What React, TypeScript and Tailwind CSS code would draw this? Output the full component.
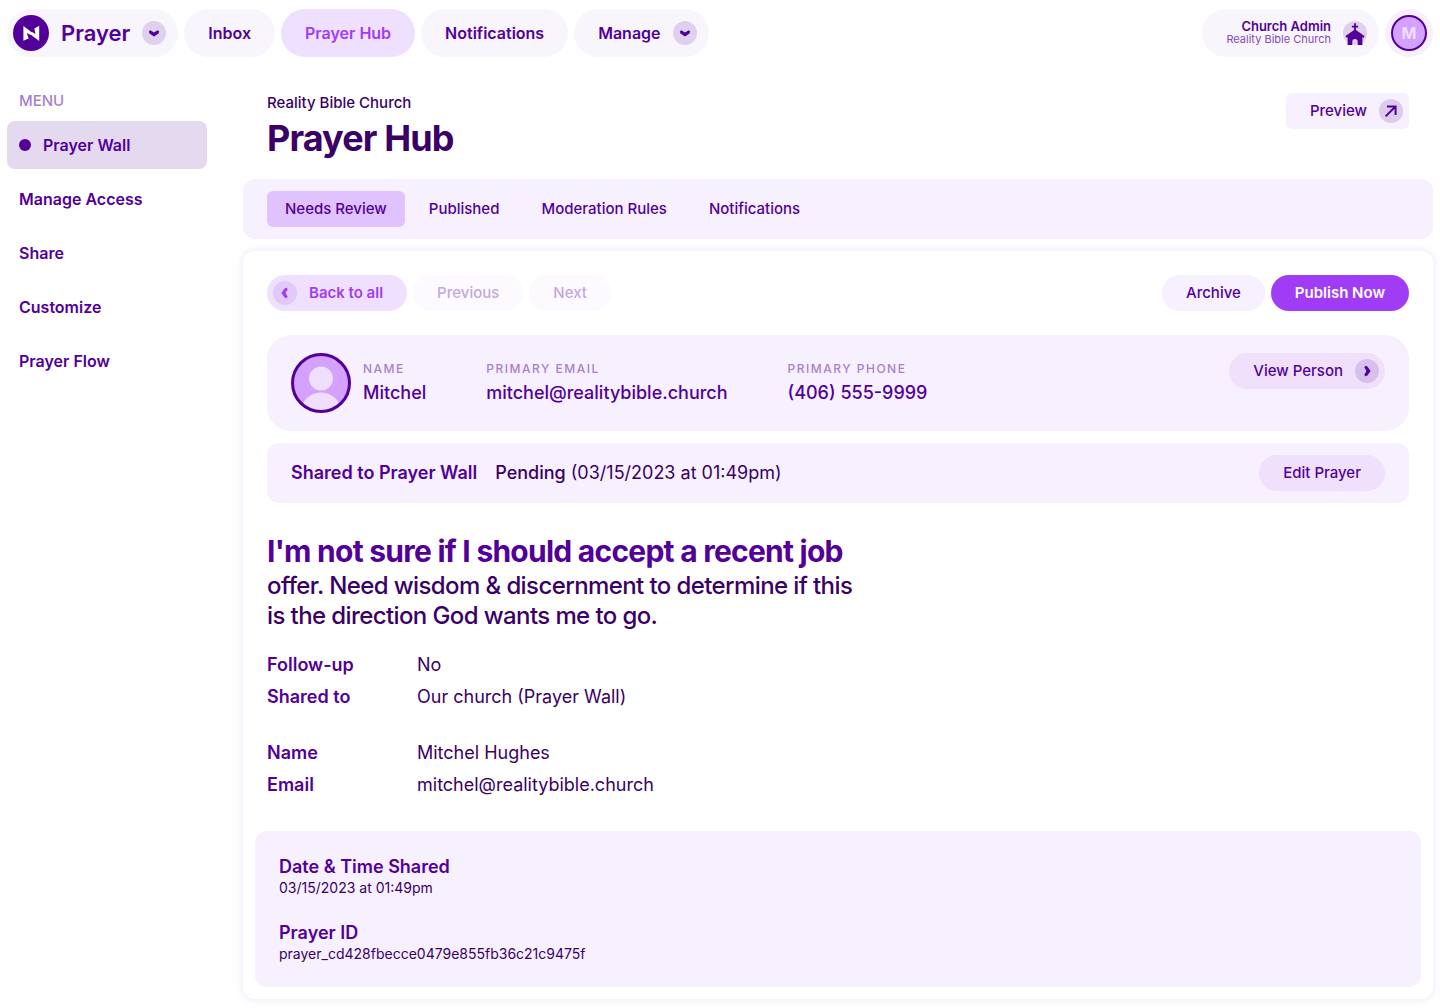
import type { ReactNode } from 'react'

const NAV = [
  { label: 'Inbox' },
  { label: 'Prayer Hub', active: true },
  { label: 'Notifications' },
  { label: 'Manage', menu: true },
]

const MENU = ['Prayer Wall', 'Manage Access', 'Share', 'Customize', 'Prayer Flow']

const TABS = ['Needs Review', 'Published', 'Moderation Rules', 'Notifications']

const PERSON = [
  { label: 'NAME', value: 'Mitchel' },
  { label: 'PRIMARY EMAIL', value: 'mitchel@realitybible.church' },
  { label: 'PRIMARY PHONE', value: '(406) 555-9999' },
]

const DETAILS = [
  [
    { label: 'Follow-up', value: 'No' },
    { label: 'Shared to', value: 'Our church (Prayer Wall)' },
  ],
  [
    { label: 'Name', value: 'Mitchel Hughes' },
    { label: 'Email', value: 'mitchel@realitybible.church' },
  ],
]

const META = [
  { label: 'Date & Time Shared', value: '03/15/2023 at 01:49pm' },
  { label: 'Prayer ID', value: 'prayer_cd428fbecce0479e855fb36c21c9475f' },
]

/* ============ ICONS ============ */
function Logo() {
  return (
    <svg width="36" height="36" viewBox="0 0 36 36" aria-hidden="true">
      <circle cx="18" cy="18" r="18" fill="#520099" />
      <path
        d="M10.4 11l8.6 6.4-1.4 2.6-3.8-2 1.8 5.4-5.2 2.4zM26.2 26l-8.6-6.4 1.4-2.6 3.400 2-1-5.600 4.800-2.600z"
        fill="#fff"
      />
    </svg>
  )
}

function IconCircle({ children, className }: { children: ReactNode; className: string }) {
  return (
    <span className={`flex size-6 shrink-0 items-center justify-center rounded-full ${className}`}>
      {children}
    </span>
  )
}

function Chevron({ className = '' }: { className?: string }) {
  return (
    <svg width="12" height="12" viewBox="0 0 12 12" className={className} aria-hidden="true">
      <path d="M.8 4.500 2.300 3.300 6 5.500 9.700 3.300 11.200 4.500 10.500 6.400 6 9.600 1.500 6.400z" fill="currentColor" />
    </svg>
  )
}

function ArrowUpRight() {
  return (
    <svg width="14" height="14" viewBox="0 0 14 14" aria-hidden="true">
      <path d="M1.6 12.4 11.200 2.800M3 2.400h8.600v8.600" fill="none" stroke="currentColor" strokeWidth="2" />
    </svg>
  )
}

function ChurchIcon() {
  return (
    <svg width="24" height="24" viewBox="0 0 24 24" aria-hidden="true">
      <circle cx="12" cy="12" r="12" fill="#dfd0ec" />
      <path
        d="M11.1 2.2h1.800v2.500h2.200v1.800h-2.200V9l8.600 6-1 1.700-1.100-.5V24h-4.700v-3.400a2.700 2.700 0 0 0-5.400 0V24H4.600v-7.800l-1.100.5-1-1.700 8.600-6V6.500H8.900V4.700h2.200z"
        fill="#520099"
      />
    </svg>
  )
}

function PersonAvatar() {
  return (
    <svg width="60" height="60" viewBox="0 0 60 60" aria-hidden="true">
      <clipPath id="avatar">
        <circle cx="30" cy="30" r="28" />
      </clipPath>
      <circle cx="30" cy="30" r="28.5" fill="#d4a1ff" />
      <g clipPath="url(#avatar)" fill="#f0deff">
        <circle cx="30" cy="25.5" r="12" />
        <circle cx="30" cy="60" r="20.5" />
      </g>
      <circle cx="30" cy="30" r="28.5" fill="none" stroke="#520099" strokeWidth="3" />
    </svg>
  )
}

/* ============ HEADER ============ */
function Header() {
  return (
    <header className="flex items-center justify-between">
      <nav className="flex gap-1.5">
        <button className="flex h-12 items-center rounded-full bg-[#f8f5fc] pr-3 pl-1.5">
          <Logo />
          <span className="mx-3 text-[22px] font-semibold">Prayer</span>
          <IconCircle className="bg-[#dfd0ec]">
            <Chevron />
          </IconCircle>
        </button>
        {NAV.map((n) =>
          n.menu ? (
            <button
              key={n.label}
              className="flex h-12 items-center gap-3 rounded-full bg-[#f8f5fc] pr-3 pl-6 text-base font-semibold"
            >
              {n.label}
              <IconCircle className="bg-[#dfd0ec]">
                <Chevron />
              </IconCircle>
            </button>
          ) : (
            <a
              key={n.label}
              href="#"
              className={`flex h-12 items-center rounded-full px-6 text-base font-semibold ${
                n.active ? 'bg-[#f0e0ff] text-[#a03cf5]' : 'bg-[#f8f5fc]'
              }`}
            >
              {n.label}
            </a>
          ),
        )}
      </nav>
      <div className="flex gap-1.5">
        <button className="flex h-12 items-center gap-3 rounded-full bg-[#f8f5fc] pr-3 pl-6 text-right">
          <span className="flex flex-col">
            <span className="text-[13px] leading-[13px] font-semibold">Church Admin</span>
            <span className="text-[11px] leading-[13px] text-[#8549b8]">Reality Bible Church</span>
          </span>
          <ChurchIcon />
        </button>
        <button className="flex size-12 items-center justify-center rounded-full bg-[#f6f0ff]">
          <span className="flex size-9 items-center justify-center rounded-full border-2 border-[#520099] bg-[#d4a1ff] text-base font-bold text-[#f0deff]">
            M
          </span>
        </button>
      </div>
    </header>
  )
}

/* ============ SIDEBAR ============ */
function Sidebar() {
  return (
    <aside className="w-[200px] shrink-0 pt-3">
      <h2 className="px-3 text-[15px] leading-6 font-medium text-[#a97fcc]">MENU</h2>
      <nav className="mt-2 flex flex-col gap-1.5">
        {MENU.map((item, i) => (
          <a
            key={item}
            href="#"
            className={`flex h-12 items-center gap-3 rounded-lg px-3 text-base font-semibold ${
              i === 0 ? 'bg-[#e5d9ef]' : ''
            }`}
          >
            {i === 0 && <span className="size-3 rounded-full bg-[#520099]" />}
            {item}
          </a>
        ))}
      </nav>
    </aside>
  )
}

/* ============ PRAYER CARD ============ */
function Toolbar() {
  return (
    <div className="flex items-center justify-between">
      <div className="flex gap-1.5">
        <button className="flex h-9 items-center gap-3 rounded-full bg-[#f0e0ff] pr-6 pl-1.5 text-[15px] font-semibold text-[#a03cf5]">
          <IconCircle className="bg-[#e2c9fb]">
            <Chevron className="rotate-90" />
          </IconCircle>
          Back to all
        </button>
        <button disabled className="h-9 rounded-full bg-[#fcfaff] px-6 text-[15px] font-medium text-[#c4a8dc]">
          Previous
        </button>
        <button disabled className="h-9 rounded-full bg-[#fcfaff] px-6 text-[15px] font-medium text-[#c4a8dc]">
          Next
        </button>
      </div>
      <div className="flex gap-1.5">
        <button className="h-9 rounded-full bg-[#f6f0ff] px-6 text-[15px] font-medium">Archive</button>
        <button className="h-9 rounded-full bg-[#a03cf5] px-6 text-[15px] font-semibold text-white">
          Publish Now
        </button>
      </div>
    </div>
  )
}

function PersonPanel() {
  return (
    <section className="mt-6 flex items-start justify-between rounded-3xl bg-[#f6f0ff] px-6 py-[18px]">
      <div className="flex items-center gap-3">
        <PersonAvatar />
        <dl className="flex gap-15">
          {PERSON.map((p) => (
            <div key={p.label}>
              <dt className="text-[12px] leading-5 font-medium tracking-[1.5px] text-[#a97fcc]">{p.label}</dt>
              <dd className="text-[18px] leading-7 font-medium">{p.value}</dd>
            </div>
          ))}
        </dl>
      </div>
      <button className="flex h-9 items-center gap-3 rounded-full bg-[#f0e0fc] pr-1.5 pl-6 text-[15px] font-medium">
        View Person
        <IconCircle className="bg-[#d7c0ec]">
          <Chevron className="-rotate-90" />
        </IconCircle>
      </button>
    </section>
  )
}

function PrayerCard() {
  return (
    <article className="mt-3 rounded-xl bg-white px-3 pt-6 pb-3 shadow-[0_0_8px_1px_#f0e8fa]">
      <div className="px-3">
        <Toolbar />
        <PersonPanel />
        <section className="mt-3 flex items-center justify-between rounded-xl bg-[#f6f0ff] px-6 py-3">
          <p className="flex gap-[18px] text-[18px] leading-7 font-semibold">
            Shared to Prayer Wall
            <span className="font-normal text-[#3a0066]">
              <span className="font-medium">Pending</span> (03/15/2023 at 01:49pm)
            </span>
          </p>
          <button className="h-9 rounded-full bg-[#f0e0fc] px-6 text-[15px] font-medium">Edit Prayer</button>
        </section>

        <h2 className="mt-7 text-[30px] leading-10 font-bold tracking-tight">
          I'm not sure if I should accept a recent job
        </h2>
        <p className="text-[24px] leading-[30px] font-medium tracking-tight text-[#3a0066]">
          offer. Need wisdom &amp; discernment to determine if this
          <br />
          is the direction God wants me to go.
        </p>

        <div className="mt-[18px] flex flex-col gap-6">
          {DETAILS.map((group, i) => (
            <dl key={i} className="grid grid-cols-[150px_1fr] text-[18px] leading-8">
              {group.map((d) => (
                <div key={d.label} className="contents">
                  <dt className="font-semibold">{d.label}</dt>
                  <dd className="text-[#3a0066]">{d.value}</dd>
                </div>
              ))}
            </dl>
          ))}
        </div>
      </div>

      <dl className="mt-[30px] flex flex-col gap-6 rounded-xl bg-[#f6f0ff] p-6">
        {META.map((m) => (
          <div key={m.label}>
            <dt className="text-[18px] leading-6 font-semibold">{m.label}</dt>
            <dd className="text-[14px] leading-[18px] text-[#3a0066]">{m.value}</dd>
          </div>
        ))}
      </dl>
    </article>
  )
}

/* ============ APP ============ */
export default function App() {
  return (
    <div className="min-h-screen bg-white px-[7px] pt-[9px] pb-2 font-[Inter,sans-serif] text-[#520099]">
      <Header />
      <div className="mt-5 flex gap-9">
        <Sidebar />
        <main className="min-w-0 flex-1 pt-4">
          <div className="flex items-start justify-between px-6">
            <div className="text-[#3a0066]">
              <p className="text-[15px] leading-5 font-medium">Reality Bible Church</p>
              <h1 className="text-[36px] leading-[50px] font-bold tracking-tight">Prayer Hub</h1>
            </div>
            <a
              href="#"
              className="flex h-9 items-center gap-3 rounded-md bg-[#f6f0ff] pr-1.5 pl-6 text-[15px] font-medium"
            >
              Preview
              <IconCircle className="bg-[#dccbec]">
                <ArrowUpRight />
              </IconCircle>
            </a>
          </div>
          <nav className="mt-4 flex gap-1.5 rounded-xl bg-[#f6f0ff] px-6 py-3">
            {TABS.map((tab, i) => (
              <a
                key={tab}
                href="#"
                className={`flex h-9 items-center rounded-md px-[18px] text-[15px] font-medium ${
                  i === 0 ? 'bg-[#e0c2ff]' : ''
                }`}
              >
                {tab}
              </a>
            ))}
          </nav>
          <PrayerCard />
        </main>
      </div>
    </div>
  )
}
